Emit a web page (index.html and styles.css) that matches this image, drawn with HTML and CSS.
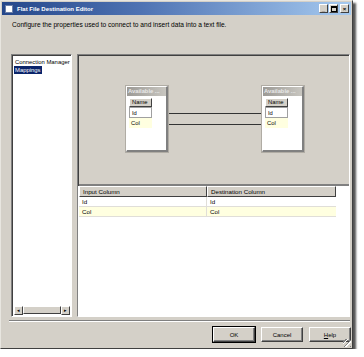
FILE: index.html
```html
<!DOCTYPE html>
<html lang="en">
<head>
    <meta charset="UTF-8">
    <title>Flat File Destination Editor</title>
    <link rel="stylesheet" href="styles.css">
</head>
<body>
    <div class="dialog">
        <!-- title bar -->
        <div class="titlebar">
            <span class="app-icon"></span>
            <span class="title">Flat File Destination Editor</span>
            <div class="win-buttons">
                <span class="win-btn">_</span>
                <span class="win-btn"><span class="max-box"></span></span>
                <span class="win-btn close">×</span>
            </div>
        </div>

        <div class="desc">Configure the properties used to connect to and insert data into a text file.</div>

        <div class="main">
            <!-- left page list -->
            <div class="sidebar">
                <div class="pages">
                    <div class="page">Connection Manager</div>
                    <div class="page selected">Mappings</div>
                </div>
                <div class="hscroll">
                    <span class="sbtn">&#9666;</span>
                    <span class="strack"></span>
                    <span class="sbtn">&#9656;</span>
                </div>
            </div>

            <!-- right panel -->
            <div class="panel">
                <div class="diagram">
                    <svg class="links" width="96" height="20" viewBox="0 0 96 20">
                        <line x1="0" y1="3.5" x2="93" y2="3.5" stroke="#333" stroke-width="1"/>
                        <line x1="0" y1="14.5" x2="93" y2="14.5" stroke="#333" stroke-width="1"/>
                        <polygon points="93,1.5 96,3.5 93,5.5" fill="#222"/>
                        <polygon points="93,12.5 96,14.5 93,16.5" fill="#222"/>
                    </svg>
                    <div class="table-box src">
                        <div class="tb-title">Available ...</div>
                        <div class="tb-head">Name</div>
                        <div class="tb-row first">Id</div>
                        <div class="tb-row second">Col</div>
                    </div>
                    <div class="table-box dst">
                        <div class="tb-title">Available ...</div>
                        <div class="tb-head">Name</div>
                        <div class="tb-row first">Id</div>
                        <div class="tb-row second">Col</div>
                    </div>
                </div>
                <div class="grid">
                    <div class="grid-row head">
                        <div class="cell">Input Column</div>
                        <div class="cell">Destination Column</div>
                    </div>
                    <div class="grid-row">
                        <div class="cell">Id</div>
                        <div class="cell">Id</div>
                    </div>
                    <div class="grid-row alt">
                        <div class="cell">Col</div>
                        <div class="cell">Col</div>
                    </div>
                </div>
            </div>
        </div>

        <div class="separator"></div>

        <div class="buttons">
            <button class="button default">OK</button>
            <button class="button">Cancel</button>
            <button class="button"><u>H</u>elp</button>
        </div>
        <span class="grip"></span>
    </div>
</body>
</html>
```

FILE: styles.css
```css
body {
    margin: 0;
    padding: 0;
    background-color: #fff;
    font-family: "Liberation Sans", Arial, sans-serif;
    font-size: 6.2px;
    color: #000;
}

.dialog {
    position: relative;
    width: 351px;
    height: 347px;
    background-color: #d4d0c8;
    border-top: 1px solid #e8e6e0;
    border-left: 1px solid #e8e6e0;
    border-right: 1px solid #404040;
    border-bottom: 1px solid #404040;
    box-shadow: 3px 3px 2px #555;
    display: flex;
    flex-direction: column;
}

.titlebar {
    height: 13px;
    margin: 1px 1px 0 1px;
    background: linear-gradient(to right, #25478a, #4f73b3 40%, #a6caf0);
    display: flex;
    align-items: center;
    color: #fff;
}

.app-icon {
    width: 6px;
    height: 6px;
    margin: 0 4px 0 3px;
    background: #fff;
    border: 1px solid #6b7fa8;
}

.title {
    font-weight: bold;
    font-size: 6px;
}

.win-buttons {
    margin-left: auto;
    margin-right: 2px;
    display: flex;
    gap: 1px;
}

.win-btn {
    width: 7px;
    height: 7px;
    background: #d4d0c8;
    border-top: 1px solid #fff;
    border-left: 1px solid #fff;
    border-right: 1px solid #404040;
    border-bottom: 1px solid #404040;
    color: #000;
    font-size: 6px;
    line-height: 6px;
    text-align: center;
    font-weight: bold;
    display: flex;
    align-items: center;
    justify-content: center;
}

.win-btn.close {
    margin-left: 1px;
}

.max-box {
    width: 4px;
    height: 3px;
    border: 1px solid #000;
    border-top-width: 2px;
}

.desc {
    margin: 6px 0 0 11px;
    height: 8px;
    line-height: 8px;
    font-size: 6.6px;
}

.main {
    margin-top: 25px;
    height: 263px;
    display: flex;
    gap: 5px;
    padding: 0 2px 0 10px;
}

.sidebar {
    width: 59px;
    background: #fff;
    border-top: 1px solid #808080;
    border-left: 1px solid #808080;
    border-right: 1px solid #fff;
    border-bottom: 1px solid #fff;
    box-shadow: inset 1px 1px 0 #404040;
    display: flex;
    flex-direction: column;
    font-size: 5.9px;
}

.pages {
    flex: 1;
    padding: 3px 0 0 2px;
    white-space: nowrap;
    overflow: hidden;
}

.page {
    height: 8px;
    line-height: 8px;
    padding: 0 1px;
    width: fit-content;
}

.page.selected {
    background: #0a246a;
    color: #fff;
}

.hscroll {
    height: 8px;
    margin: 0 1px 2px 2px;
    display: flex;
    background: #ece9e2;
}

.sbtn {
    width: 7px;
    height: 7px;
    background: #d4d0c8;
    border-top: 1px solid #fff;
    border-left: 1px solid #fff;
    border-right: 1px solid #404040;
    border-bottom: 1px solid #404040;
    font-size: 5px;
    line-height: 7px;
    text-align: center;
}

.strack {
    flex: 1;
    background: #d4d0c8;
    border-top: 1px solid #fff;
    border-left: 1px solid #fff;
    border-right: 1px solid #404040;
    border-bottom: 1px solid #404040;
}

.panel {
    flex: 1;
    border-top: 1px solid #808080;
    border-left: 1px solid #808080;
    border-right: 1px solid #fff;
    border-bottom: 1px solid #fff;
    box-shadow: inset 1px 1px 0 #404040;
    display: flex;
    flex-direction: column;
    background: #fff;
}

.diagram {
    position: relative;
    height: 128px;
    background: #d4d0c8;
    border-bottom: 2px solid #808080;
    margin: 1px 0 0 1px;
}

.links {
    position: absolute;
    left: 89px;
    top: 54px;
}

.table-box {
    position: absolute;
    top: 30px;
    width: 39px;
    height: 63px;
    background: #fff;
    border-top: 1px solid #fff;
    border-left: 1px solid #fff;
    border-right: 2px solid #808080;
    border-bottom: 2px solid #808080;
    box-shadow: 0 0 0 1px #b0aca4;
    font-size: 5.8px;
}

.table-box.src {
    left: 47px;
}

.table-box.dst {
    left: 183px;
}

.tb-title {
    height: 9px;
    line-height: 9px;
    padding-left: 1px;
    background: linear-gradient(to right, #9c9a96, #c8c6c0);
    color: #e8e8e8;
    font-weight: bold;
    white-space: nowrap;
    overflow: hidden;
}

.tb-head {
    width: 19px;
    height: 7px;
    line-height: 7px;
    margin: 2px 0 0 2px;
    padding-left: 2px;
    background: #d4d0c8;
    border-top: 1px solid #fff;
    border-left: 1px solid #fff;
    border-right: 1px solid #404040;
    border-bottom: 1px solid #404040;
}

.tb-row {
    width: 21px;
    height: 10px;
    line-height: 10px;
    margin-left: 2px;
    padding-left: 2px;
}

.tb-row.first {
    background: #fff;
    border: 1px solid #a0a0a0;
    width: 19px;
    height: 9px;
}

.tb-row.second {
    background: #ffffe0;
}

.grid {
    flex: 1;
    background: #fff;
    padding-left: 1px;
}

.grid-row {
    display: flex;
    width: 257px;
}

.grid-row .cell {
    height: 10px;
    line-height: 10px;
    padding-left: 3px;
    border-bottom: 1px solid #e0ded8;
    box-sizing: border-box;
}

.grid-row .cell:first-child {
    width: 128px;
    border-right: 1px solid #e0ded8;
}

.grid-row .cell:last-child {
    flex: 1;
}

.grid-row.head .cell {
    background: #d4d0c8;
    border-top: 1px solid #fff;
    border-right: 1px solid #404040;
    border-bottom: 1px solid #404040;
    border-left: 1px solid #fff;
    height: 11px;
}

.grid-row.alt .cell {
    background: #ffffe0;
}

.separator {
    margin: 3px 2px 0 8px;
    border-top: 1px solid #808080;
    border-bottom: 1px solid #fff;
}

.buttons {
    display: flex;
    justify-content: flex-end;
    gap: 6px;
    margin-top: 5px;
    padding-right: 1px;
}

.button {
    width: 42px;
    height: 15px;
    padding: 0;
    font-family: "Liberation Sans", Arial, sans-serif;
    font-size: 6px;
    color: #000;
    background: #d4d0c8;
    border-top: 1px solid #fff;
    border-left: 1px solid #fff;
    border-right: 1px solid #404040;
    border-bottom: 1px solid #404040;
    box-shadow: inset -1px -1px 0 #808080;
}

.button.default {
    outline: 1px solid #000;
}

.grip {
    position: absolute;
    right: 1px;
    bottom: 1px;
    width: 8px;
    height: 8px;
    background: repeating-linear-gradient(135deg, transparent 0 2px, #808080 2px 3px, #fff 3px 4px);
}
```
